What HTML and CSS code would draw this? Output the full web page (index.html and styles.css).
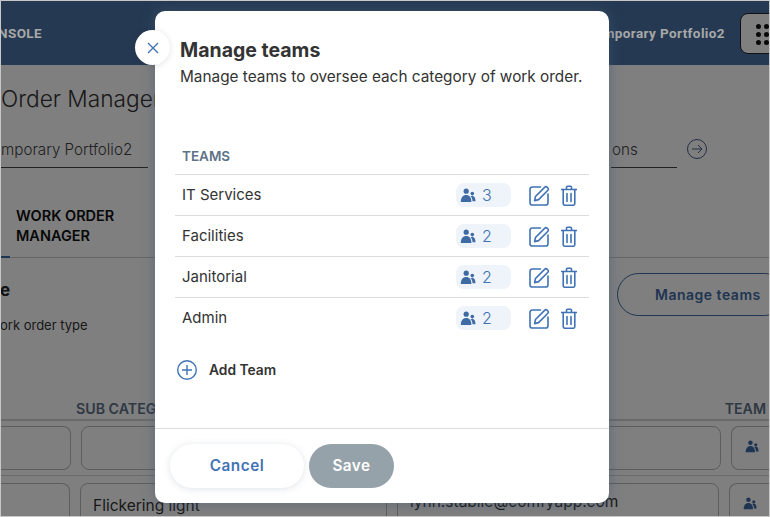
FILE: index.html
```html
<!DOCTYPE html>
<html lang="en">
<head>
<meta charset="utf-8">
<title>Manage teams</title>
<link rel="stylesheet" href="styles.css">
</head>
<body>
<svg class="sprites" width="0" height="0" aria-hidden="true">
  <symbol id="people" viewBox="0 0 16 16">
    <circle cx="6.2" cy="4.2" r="2.6"/>
    <path d="M.8 15c0-4.4 2.2-7 5.4-7s5.2 2.6 5.2 7z"/>
    <circle cx="12.3" cy="6.6" r="1.8"/>
    <path d="M10.6 9.2c.5-.3 1.1-.5 1.7-.5 2 0 3.2 2.2 3.2 5.5h-3c0-2-.6-3.700-1.900-5z"/>
  </symbol>
  <symbol id="edit" viewBox="0 0 21 21">
    <path class="ln" d="M11.500 2H3.300A2.300 2.300 0 0 0 1 4.300v13.400A2.300 2.300 0 0 0 3.300 20h13.400a2.300 2.300 0 0 0 2.300-2.300V9"/>
    <path class="ln" d="M6.500 11.500 15.800 2.100a1.500 1.500 0 0 1 2.200 0l.9.900a1.500 1.500 0 0 1 0 2.200l-9.300 9.400-4 1z"/>
  </symbol>
  <symbol id="trash" viewBox="0 0 16 21">
    <path class="ln" d="M.5 4.500h15M5.500 4.500V2.200a1 1 0 0 1 1-1h3a1 1 0 0 1 1 1v2.300"/>
    <path class="ln" d="M2.200 4.500v14a1.800 1.800 0 0 0 1.800 1.800h8a1.800 1.800 0 0 0 1.800-1.800v-14M6 8.500v8M10 8.500v8"/>
  </symbol>
</svg>

<div class="frame">
  <div class="app">
    <header class="topbar">
      <span class="brand">NSOLE</span>
      <span class="portfolio">Contemporary Portfolio2</span>
      <span class="apps"><i></i><i></i><i></i><i></i><i></i><i></i><i></i><i></i><i></i></span>
    </header>
    <h1 class="page-title">Order Manager</h1>
    <div class="filters">
      <div class="select select-a">mporary Portfolio2</div>
      <div class="select select-b">ons</div>
      <svg class="go" width="20" height="20" viewBox="0 0 20 20">
        <circle cx="10" cy="10" r="9.500"/>
        <path d="M5 10h10M11 6l4 4-4 4"/>
      </svg>
    </div>
    <nav class="tabs">
      <span class="tab-marker"></span>
      <span class="tab">WORK ORDER<br>MANAGER</span>
    </nav>
    <section class="types">
      <div class="types-text">
        <div class="types-title">e</div>
        <div class="types-sub">ork order type</div>
      </div>
      <button class="manage-btn">Manage teams</button>
    </section>
    <div class="thead">
      <span class="th-sub">SUB CATEGORY</span>
      <span class="th-team">TEAM</span>
    </div>
    <div class="trow trow-first">
      <span class="cell"></span>
      <span class="cell"></span>
      <span class="cell"></span>
      <span class="cell cell-team"><svg class="tp" width="14" height="14"><use href="#people"/></svg></span>
    </div>
    <div class="trow trow-second">
      <span class="cell"></span>
      <span class="cell cell-tall">Flickering light</span>
      <span class="cell">lynn.stabile@comfyapp.com</span>
      <span class="cell cell-team"><svg class="tp" width="14" height="14"><use href="#people"/></svg></span>
    </div>
  </div>

  <div class="scrim"></div>

  <div class="modal">
    <div class="modal-head">
      <h2 class="modal-title">Manage teams</h2>
      <p class="modal-sub">Manage teams to oversee each category of work order.</p>
    </div>
    <div class="list">
      <div class="list-head">TEAMS</div>
      <div class="team">
        <span class="team-name">IT Services</span>
        <span class="pill"><svg width="16" height="16"><use href="#people"/></svg>3</span>
        <svg class="ic-edit" width="21" height="21"><use href="#edit"/></svg>
        <svg class="ic-trash" width="16" height="21"><use href="#trash"/></svg>
      </div>
      <div class="team">
        <span class="team-name">Facilities</span>
        <span class="pill"><svg width="16" height="16"><use href="#people"/></svg>2</span>
        <svg class="ic-edit" width="21" height="21"><use href="#edit"/></svg>
        <svg class="ic-trash" width="16" height="21"><use href="#trash"/></svg>
      </div>
      <div class="team">
        <span class="team-name">Janitorial</span>
        <span class="pill"><svg width="16" height="16"><use href="#people"/></svg>2</span>
        <svg class="ic-edit" width="21" height="21"><use href="#edit"/></svg>
        <svg class="ic-trash" width="16" height="21"><use href="#trash"/></svg>
      </div>
      <div class="team team-last">
        <span class="team-name">Admin</span>
        <span class="pill"><svg width="16" height="16"><use href="#people"/></svg>2</span>
        <svg class="ic-edit" width="21" height="21"><use href="#edit"/></svg>
        <svg class="ic-trash" width="16" height="21"><use href="#trash"/></svg>
      </div>
    </div>
    <div class="add">
      <svg width="20" height="20" viewBox="0 0 20 20"><circle cx="10" cy="10" r="9.300"/><path d="M5 10h10M10 5v10"/></svg>
      <span>Add Team</span>
    </div>
    <div class="modal-foot">
      <button class="btn btn-cancel">Cancel</button>
      <button class="btn btn-save">Save</button>
    </div>
  </div>

  <button class="close" aria-label="Close">
    <svg width="12" height="12" viewBox="0 0 12 12"><path d="M1 1l10 10M11 1 1 11"/></svg>
  </button>
</div>
</body>
</html>
```

FILE: styles.css
```css
* { box-sizing: border-box; }
html, body { margin: 0; padding: 0; }
body { width: 770px; height: 517px; overflow: hidden; background: #fff; }
.sprites { position: absolute; }
h1, h2, p { margin: 0; font-weight: normal; }
button { font: inherit; cursor: pointer; }

.frame {
  position: relative;
  width: 770px;
  height: 517px;
  border: 1px solid #c8c8c8;
  overflow: hidden;
  font-family: Inter, sans-serif;
  color: #333;
}
.app { width: 100%; height: 100%; background: #fff; overflow: hidden; display: flex; flex-direction: column; }
.app > * { flex: none; }

.topbar { height: 64px; background: #4a74a4; display: flex; align-items: center; }
.brand, .portfolio { position: relative; z-index: 1; font: 700 13.500px Roboto, sans-serif; letter-spacing: .4px; color: #a8a8a8; }
.brand { margin-left: -3px; }
.portfolio { margin-left: auto; margin-right: 15px; }
.apps {
  width: 41px; height: 41px; margin-right: -12px; background: #fff; border-radius: 8px;
  border: 1px solid #222; padding: 10px 0 0 15px;
  display: grid; grid-template-columns: repeat(3, 5px); grid-auto-rows: 5px; gap: 3px;
}
.apps i { background: #111; border-radius: 50%; }

.page-title { margin: 19px 0 0; font: 300 22.700px/29px Inter, sans-serif; color: #333; white-space: nowrap; }

.filters { display: flex; align-items: flex-start; margin-top: 20px; height: 46px; }
.select { height: 35px; border-bottom: 1px solid #444; font: 300 15.200px/24px Inter, sans-serif; color: #444; padding-top: 5px; }
.select-a { width: 147px; }
.select-b { width: 66px; margin-left: 463px; padding-left: 1px; }
.go { margin: 6px 0 0 10px; fill: none; stroke: #4a5a8a; stroke-width: 1; }

.tabs { position: relative; height: 80px; margin-top: -1px; border-bottom: 1px solid #ccc; padding: 28px 0 0 15px; }
.tab { display: block; font: 600 14.500px/20px Inter, sans-serif; color: #111; }
.tab-marker { position: absolute; left: 0; bottom: -1px; width: 9px; height: 2px; background: #3f6ba5; }

.types { display: flex; justify-content: space-between; height: 151px; }
.types-title { font: 700 17px/22px Inter, sans-serif; color: #222; margin: 21px 0 0 -1px; }
.types-sub { font: 400 13px/20px Inter, sans-serif; color: #333; margin-top: 14px; margin-left: -1px; }
.manage-btn {
  width: 169px; height: 43px; margin: 15px -17px 0 0; background: transparent;
  border: 1px solid #3f6ba5; border-radius: 22px; color: #3f6ba5;
  font: 600 14px Inter, sans-serif; letter-spacing: .5px; text-align: left; padding-left: 37px;
}

.thead { display: flex; margin-top: -1px; height: 11px; font: 600 14.200px/16px Inter, sans-serif; color: #5d7288; }
.th-sub { margin-left: 75px; white-space: nowrap; margin-top: -7px; }
.th-team { margin-left: auto; margin-right: 3px; margin-top: -7px; }
.trow { display: grid; column-gap: 10px; }
.trow-first { grid-template-columns: 70px 307px 323px 60px; border-top: 2px solid #d5d5d5; padding-top: 5px; height: 57px; border-bottom: 1px solid #d5d5d5; }
.trow-second { grid-template-columns: 69px 307px 322px 60px; margin-top: 7px; }
.cell { height: 44px; border: 1px solid #bbb; border-radius: 8px; font: 400 15.500px/36px Inter, sans-serif; color: #333; padding-left: 12px; white-space: nowrap; overflow: hidden; }
.cell-tall { line-height: 44px; }
.trow .cell:first-child { border-left: 0; border-radius: 0 8px 8px 0; }
.cell-team { border-right: 0; border-radius: 8px 0 0 8px; padding: 12px 0 0 13px; line-height: 0; }
.tp { fill: #3f6ba5; }

.scrim { position: absolute; inset: 0; background: rgba(0, 0, 0, .5); }

.close {
  position: absolute; left: 134px; top: 29px; width: 35px; height: 35px; padding: 0;
  border: 0; border-radius: 50%; background: #fff; box-shadow: 0 1px 6px rgba(0,0,0,.12);
  display: flex; align-items: center; justify-content: center; z-index: 3;
}
.close svg { fill: none; stroke: #3f73b5; stroke-width: 1.400; }

.modal {
  position: absolute; z-index: 2; left: 154px; top: 10px; width: 454px; height: 492px;
  background: #fff; border-radius: 10px; box-shadow: 0 0 14px rgba(70,90,120,.55);
  display: flex; flex-direction: column;
}
.modal-head { padding: 27px 0 0 25px; height: 136px; }
.modal-title { font: 700 19.500px/24px Inter, sans-serif; color: #333; }
.modal-sub { font: 400 15.350px/20px Inter, sans-serif; color: #333; margin-top: 5px; }

.list { margin: 0 20px; }
.list-head { font: 600 13.500px/16px Inter, sans-serif; color: #5d7288; padding: 1px 0 9px 7px; height: 28px; border-bottom: 1px solid #ddd; }
.team { display: flex; align-items: center; height: 41px; border-bottom: 1px solid #ddd; padding-left: 7px; }
.team-last { border-bottom: 0; height: 40px; }
.team-name { font: 400 15px/20px Inter, sans-serif; color: #333; width: 274px; }
.pill {
  width: 55px; height: 24px; border-radius: 8px; background: #eef4fa; color: #3f73b5;
  display: flex; align-items: center; padding-left: 4px; gap: 6px; font: 300 16px/24px Inter, sans-serif;
}
.pill svg { fill: #3f6ba5; }
.ic-edit { margin-left: 18px; }
.ic-trash { margin-left: 11px; }
.ln { fill: none; stroke: #3f73b5; stroke-width: 1.600; stroke-linecap: round; stroke-linejoin: round; }

.add { display: flex; align-items: center; gap: 12px; padding-left: 22px; height: 20px; margin-top: 22px; font: 600 13.800px/20px Inter, sans-serif; color: #333; }
.add svg { fill: none; stroke: #3f73b5; stroke-width: 1.400; }

.modal-foot {
  margin-top: auto; height: 75px; border-top: 1px solid #ddd;
  display: flex; gap: 5px; padding: 15px 0 0 15px;
}
.btn { height: 44px; border: 0; border-radius: 22px; padding: 0 0 2px; font: 600 15.300px Inter, sans-serif; letter-spacing: .5px; }
.btn-cancel { width: 134px; background: #fff; color: #3f73b5; box-shadow: 0 1px 7px rgba(60,80,110,.16); }
.btn-save { width: 85px; background: #95a2a9; color: #fff; }
```
